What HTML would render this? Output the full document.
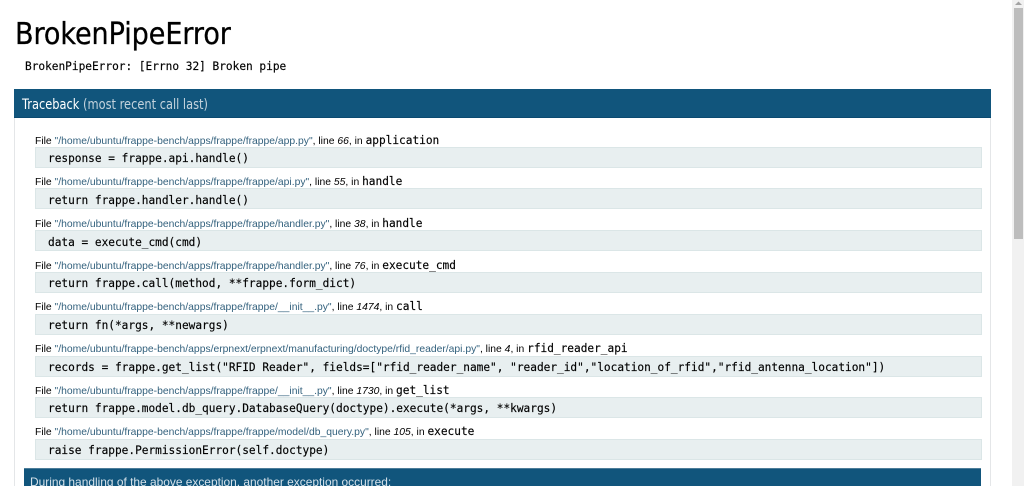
<!DOCTYPE html>
<html><head><meta charset="utf-8"><style>
html,body{margin:0;padding:0;background:#fff;overflow:hidden}
body{width:1024px;height:486px;position:relative;font-family:"Liberation Sans",sans-serif;color:#000}
div{position:absolute;white-space:pre}
.m{font-family:"DejaVu Sans Mono","Liberation Mono",monospace;font-size:11.14px;-webkit-text-stroke:.15px #000}
.f{left:35px;font-size:10.35px;line-height:14px;height:14px;color:#000}
.f span{color:#33617d}
.f i{font-style:italic}
.f b{font-weight:normal;font-family:"DejaVu Sans Mono",monospace;font-size:11.14px;-webkit-text-stroke:.15px #000}
.c{left:35px;width:945px;height:19px;background:#e8eff0;border:1px solid #dbe6e7}
.t{left:48px;line-height:16px;height:16px;color:#000}
</style></head><body>
<div style="left:15px;top:17px;font-size:30px;line-height:36px;letter-spacing:-0.1px;color:#000;font-family:'DejaVu Sans',sans-serif;transform-origin:0 0;transform:scaleX(.902);-webkit-text-stroke:.3px #000">BrokenPipeError</div>
<div class="m" style="left:25px;top:59px;line-height:16px">BrokenPipeError: [Errno 32] Broken pipe</div>
<div style="left:14px;top:89px;width:977px;height:29px;background:#11557c;box-shadow:inset 0 -1px 0 #0b4a70"></div>
<div style="left:22px;top:96px;font-size:14px;line-height:18px;color:#fff;font-family:'DejaVu Sans',sans-serif;transform-origin:0 0;transform:scaleX(.815)">Traceback <span style="color:#c4d3dd">(most recent call last)</span></div>
<div style="left:14px;top:118px;width:975px;height:368px;border-left:1px solid #e4e6e8;border-right:1px solid #e4e6e8"></div>

<div class="f" style="top:134px">File <span>"/home/ubuntu/frappe-bench/apps/frappe/frappe/app.py"</span>, line <i>66</i>, in <b>application</b></div>
<div class="c" style="top:147px"></div><div class="m t" style="top:151px">response = frappe.api.handle()</div>

<div class="f" style="top:175px">File <span>"/home/ubuntu/frappe-bench/apps/frappe/frappe/api.py"</span>, line <i>55</i>, in <b>handle</b></div>
<div class="c" style="top:188px"></div><div class="m t" style="top:193px">return frappe.handler.handle()</div>

<div class="f" style="top:217px">File <span>"/home/ubuntu/frappe-bench/apps/frappe/frappe/handler.py"</span>, line <i>38</i>, in <b>handle</b></div>
<div class="c" style="top:230px"></div><div class="m t" style="top:235px">data = execute_cmd(cmd)</div>

<div class="f" style="top:259px">File <span>"/home/ubuntu/frappe-bench/apps/frappe/frappe/handler.py"</span>, line <i>76</i>, in <b>execute_cmd</b></div>
<div class="c" style="top:272px"></div><div class="m t" style="top:276px">return frappe.call(method, **frappe.form_dict)</div>

<div class="f" style="top:300px">File <span>"/home/ubuntu/frappe-bench/apps/frappe/frappe/__init__.py"</span>, line <i>1474</i>, in <b>call</b></div>
<div class="c" style="top:314px"></div><div class="m t" style="top:318px">return fn(*args, **newargs)</div>

<div class="f" style="top:342px">File <span>"/home/ubuntu/frappe-bench/apps/erpnext/erpnext/manufacturing/doctype/rfid_reader/api.py"</span>, line <i>4</i>, in <b>rfid_reader_api</b></div>
<div class="c" style="top:356px"></div><div class="m t" style="top:360px">records = frappe.get_list("RFID Reader", fields=["rfid_reader_name", "reader_id","location_of_rfid","rfid_antenna_location"])</div>

<div class="f" style="top:384px">File <span>"/home/ubuntu/frappe-bench/apps/frappe/frappe/__init__.py"</span>, line <i>1730</i>, in <b>get_list</b></div>
<div class="c" style="top:397px"></div><div class="m t" style="top:401px">return frappe.model.db_query.DatabaseQuery(doctype).execute(*args, **kwargs)</div>

<div class="f" style="top:425px">File <span>"/home/ubuntu/frappe-bench/apps/frappe/frappe/model/db_query.py"</span>, line <i>105</i>, in <b>execute</b></div>
<div class="c" style="top:439px"></div><div class="m t" style="top:443px">raise frappe.PermissionError(self.doctype)</div>

<div style="left:24px;top:468px;width:957px;height:18px;background:#11557c;border-top:1px solid #4d7d99;box-sizing:border-box"></div>
<div style="left:30px;top:475px;font-size:11.93px;line-height:14px;color:#d6e2ea">During handling of the above exception, another exception occurred:</div>

<div style="left:1012px;top:0;width:12px;height:486px;background:#f1f1f1"></div>
<div style="left:1014px;top:8px;width:9px;height:231px;background:#bdbdbd"></div>
<svg style="position:absolute;left:1014px;top:1px" width="9" height="5"><path d="M4.5 0.5L8 4H1Z" fill="#a3a3a3"/></svg>
</body></html>
